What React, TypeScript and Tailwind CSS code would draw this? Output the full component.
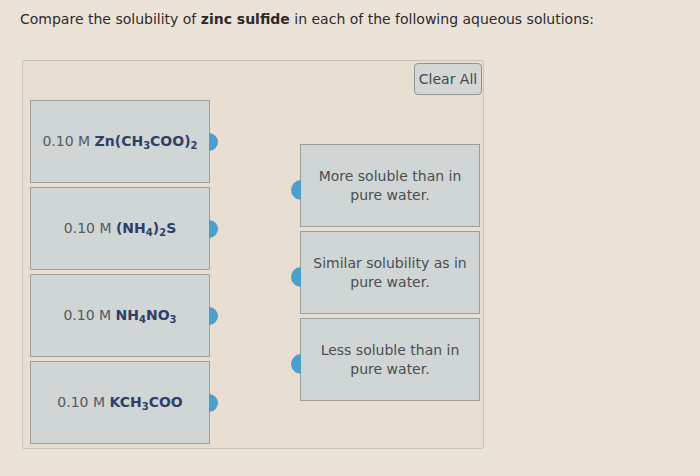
import React from "react";

const font = { fontFamily: '"DejaVu Sans", Verdana, sans-serif' };

function Sub({ children }: { children: React.ReactNode }) {
  return <sub className="-bottom-[0.3em] text-[10px]">{children}</sub>;
}

type Item = { id: string; formula: React.ReactNode };

const solutions: Item[] = [
  {
    id: "zn",
    formula: (
      <>
        Zn(CH<Sub>3</Sub>COO)<Sub>2</Sub>
      </>
    ),
  },
  {
    id: "nh4s",
    formula: (
      <>
        (NH<Sub>4</Sub>)<Sub>2</Sub>S
      </>
    ),
  },
  {
    id: "nh4no3",
    formula: (
      <>
        NH<Sub>4</Sub>NO<Sub>3</Sub>
      </>
    ),
  },
  {
    id: "kac",
    formula: (
      <>
        KCH<Sub>3</Sub>COO
      </>
    ),
  },
];

const targets = [
  ["More soluble than in", "pure water."],
  ["Similar solubility as in", "pure water."],
  ["Less soluble than in", "pure water."],
];

function SourceCard({ item }: { item: Item }) {
  return (
    <div className="relative flex h-[83px] w-[180px] items-center justify-center border border-[#9e9f9b] bg-[#cfd6d5] text-[14px] text-[#555a5f]">
      <span>
        0.10 M <b className="font-bold text-[#2f3f68]">{item.formula}</b>
      </span>
      <div className="absolute left-full top-1/2 h-[18px] w-[9px] -translate-y-1/2 rounded-r-full bg-[#4b9fcd]" />
    </div>
  );
}

function TargetCard({ lines }: { lines: string[] }) {
  return (
    <div className="relative flex h-[83px] w-[180px] flex-col items-center justify-center border border-[#9e9f9b] bg-[#cfd6d5] text-[14px] leading-[19px] text-[#4b4e52]">
      {lines.map((l) => (
        <span key={l}>{l}</span>
      ))}
      <div className="absolute right-full top-1/2 mt-[4px] h-[20px] w-[10px] -translate-y-1/2 rounded-l-full bg-[#4b9fcd]" />
    </div>
  );
}

export default function App() {
  return (
    <div className="h-[476px] w-[700px] overflow-hidden bg-[#ece3d8]" style={font}>
      <div className="pl-[20px] pt-[9px] text-[14px] leading-[20px] text-[#2c2a2a]">
        Compare the solubility of <b className="font-bold">zinc sulfide</b> in each of the following aqueous
        solutions:
      </div>

      <div className="ml-[22px] mt-[31px] h-[389px] w-[462px] rounded-[2px] border border-[#cbc4b9] bg-[#e8ded2]">
        <div className="flex justify-end pr-[1px] pt-[2px]">
          <button className="h-[32px] w-[68px] rounded-[4px] border border-[#8f9696] bg-[#d4d7d4] text-[14px] text-[#3f4a52]">
            Clear All
          </button>
        </div>

        <div className="mt-[5px] flex">
          <div className="flex flex-col gap-[4px] pl-[7px]">
            {solutions.map((s) => (
              <SourceCard key={s.id} item={s} />
            ))}
          </div>
          <div className="ml-auto mr-[3px] mt-[44px] flex flex-col gap-[4px]">
            {targets.map((t) => (
              <TargetCard key={t[0]} lines={t} />
            ))}
          </div>
        </div>
      </div>
    </div>
  );
}
